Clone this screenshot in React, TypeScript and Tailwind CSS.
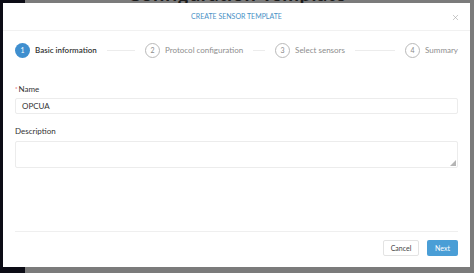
import { X } from 'lucide-react'

const steps = [
  { n: 1, label: 'Basic information' },
  { n: 2, label: 'Protocol configuration' },
  { n: 3, label: 'Select sensors' },
  { n: 4, label: 'Summary' },
]

function Step({ n, label, active }: { n: number; label: string; active: boolean }) {
  return (
    <div className="flex items-center gap-[5px] shrink-0">
      <span
        className={`w-[15px] h-[15px] rounded-full flex items-center justify-center text-[7px] ${
          active ? 'bg-[#3f8fcf] text-white' : 'border border-[#b9b9b9] text-[#8a8a8a]'
        }`}
      >
        {n}
      </span>
      <span className={`text-[8px] ${active ? 'text-[#333] font-semibold' : 'text-[#8d8d8d]'}`}>{label}</span>
    </div>
  )
}

export default function App() {
  return (
    <div className="relative w-[474px] h-[273px] overflow-hidden bg-[#7b7b7b] font-['Lato',sans-serif]">
      {/* page behind the overlay */}
      <div className="absolute z-0 inset-y-0 left-0 w-[25px] bg-[#0c0c16]" />
      <div className="absolute z-0 top-[-17px] left-0 right-0 text-center text-[20px] leading-[20px] font-bold text-[#1c1c1c] tracking-wide">
        Configuration Template
      </div>

      {/* modal */}
      <div className="absolute z-10 left-[3px] top-[3px] w-[467px] h-[264px] bg-white flex flex-col">
        <div className="relative h-[28px] flex items-center justify-center border-b border-[#f1f1f1] bg-white">
          <span className="text-[7px] text-[#4a92c6]">CREATE SENSOR TEMPLATE</span>
          <X size={9} strokeWidth={1.5} className="absolute right-[10px] top-[10px] text-[#a0a0a0]" />
        </div>

        <div className="flex items-center px-[12px] mt-[11px] h-[16px]">
          {steps.map((s, i) => (
            <div key={s.n} className={`flex items-center ${i < steps.length - 1 ? 'flex-1' : ''}`}>
              <Step n={s.n} label={s.label} active={i === 0} />
              {i < steps.length - 1 && <div className="flex-1 h-px bg-[#ececec] mx-[10px]" />}
            </div>
          ))}
        </div>

        <div className="px-[12px] mt-[26px] flex flex-col">
          <label className="text-[8px] text-[#333] leading-[10px]">
            <span className="text-[#d9363e] text-[6px] align-top mr-[1px]">*</span>Name
          </label>
          <div className="mt-[4px] h-[16px] border border-[#ececec] rounded-[2px] flex items-center px-[6px] text-[8px] text-[#333]">
            OPCUA
          </div>
          <label className="mt-[12px] text-[8px] text-[#333] leading-[10px]">Description</label>
          <div className="relative mt-[5px] h-[27px] border border-[#ececec] rounded-[2px]">
            <svg width="6" height="6" viewBox="0 0 6 6" className="absolute right-[1px] bottom-[1px]">
              <path d="M6 0 L6 6 L0 6 Z" fill="#b5b5b5" />
            </svg>
          </div>
        </div>

        <div className="flex-1" />
        <div className="mx-[12px] border-t border-[#efefef]" />
        <div className="flex justify-end gap-[8px] px-[12px] pt-[8px] pb-[11px]">
          <button className="h-[16px] w-[36px] border border-[#e3e3e3] rounded-[2px] text-[7px] text-[#444] bg-white">
            Cancel
          </button>
          <button className="h-[16px] w-[31px] rounded-[2px] text-[7px] text-white bg-[#4a9ed6]">Next</button>
        </div>
      </div>
    </div>
  )
}
